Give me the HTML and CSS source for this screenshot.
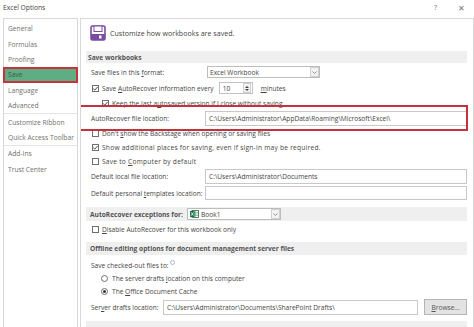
FILE: index.html
```html
<!DOCTYPE html>
<html lang="en">
  <head>
    <meta charset="UTF-8">
    <title>Excel Options</title>
    <link rel="stylesheet" href="styles.css">
  </head>
  <body>
    <div class="dialog">
      <div class="titlebar">
        <span class="title">Excel Options</span>
        <span class="help">?</span>
        <span class="close">&#x2715;</span>
      </div>

      <div class="body">
        <div class="nav">
          <div class="nav-item">General</div>
          <div class="nav-item">Formulas</div>
          <div class="nav-item">Proofing</div>
          <div class="nav-item selected">Save</div>
          <div class="nav-item">Language</div>
          <div class="nav-item">Advanced</div>
          <div class="nav-sep"></div>
          <div class="nav-item">Customize Ribbon</div>
          <div class="nav-item">Quick Access Toolbar</div>
          <div class="nav-sep"></div>
          <div class="nav-item">Add-Ins</div>
          <div class="nav-item">Trust Center</div>
        </div>

        <div class="panel">
          <div class="intro">
            <svg class="save-icon" width="16" height="16" viewBox="0 0 16 16">
              <rect x="1" y="1" width="14" height="14" rx="1.5" fill="#fff" stroke="#7a4ca2" stroke-width="1.6"/>
              <rect x="1" y="9" width="14" height="6" fill="#7a4ca2"/>
              <rect x="9" y="10.5" width="2.5" height="3" fill="#fff"/>
              <rect x="4" y="1" width="8" height="5.5" fill="#fff" stroke="#7a4ca2" stroke-width="1"/>
            </svg>
            <span>Customize how workbooks are saved.</span>
          </div>

          <div class="section">Save workbooks</div>

          <div class="row tall">
            <span class="label short">Save files in this <u>f</u>ormat:</span>
            <div class="select format">
              <span class="select-text">Excel Workbook</span>
              <span class="arrow"><svg width="5" height="3" viewBox="0 0 5 3"><path d="M0.5 0.5 L2.5 2.5 L4.5 0.5" fill="none" stroke="#777" stroke-width="0.8"/></svg></span>
            </div>
          </div>

          <div class="row tall">
            <span class="check on"><svg width="7" height="7" viewBox="0 0 7 7"><path d="M1.2 3.6 L2.8 5.1 L5.8 1.8" fill="none" stroke="#333" stroke-width="0.9"/></svg></span>
            <span>Save <u>A</u>utoRecover information every</span>
            <div class="spin">
              <span>10</span>
              <span class="spin-btns"><i class="up"></i><i class="down"></i></span>
            </div>
            <span class="minutes"><u>m</u>inutes</span>
          </div>

          <div class="row indent">
            <span class="check on"><svg width="7" height="7" viewBox="0 0 7 7"><path d="M1.2 3.6 L2.8 5.1 L5.8 1.8" fill="none" stroke="#333" stroke-width="0.9"/></svg></span>
            <span>Keep the last a<u>u</u>tosaved version if I close without saving</span>
          </div>

          <div class="row tall marked">
            <span class="label">AutoRecover file location:</span>
            <div class="input">C:\Users\Administrator\AppData\Roaming\Microsoft\Excel\</div>
          </div>

          <div class="row">
            <span class="check"></span>
            <span>Don't <u>s</u>how the Backstage when opening or saving files</span>
          </div>

          <div class="row">
            <span class="check on"><svg width="7" height="7" viewBox="0 0 7 7"><path d="M1.2 3.6 L2.8 5.1 L5.8 1.8" fill="none" stroke="#333" stroke-width="0.9"/></svg></span>
            <span class="wide">Show additional places for saving, even if sign-in may be required.</span>
          </div>

          <div class="row">
            <span class="check"></span>
            <span class="wide">Save to <u>C</u>omputer by default</span>
          </div>

          <div class="row tall">
            <span class="label">Default local f<u>i</u>le location:</span>
            <div class="input">C:\Users\Administrator\Documents</div>
          </div>

          <div class="row tall templates">
            <span class="label">Default personal <u>t</u>emplates location:</span>
            <div class="input"></div>
          </div>

          <div class="section with-select">
            <span class="section-label">AutoRecover exceptions for:</span>
            <div class="select book">
              <svg class="xl-icon" width="9" height="8" viewBox="0 0 9 8">
                <rect x="2" y="0.5" width="6.5" height="7" fill="#fff" stroke="#1e7145" stroke-width="0.8"/>
                <path d="M5 0.5 V7.5 M2 2.8 H8.5 M2 5.2 H8.5" stroke="#1e7145" stroke-width="0.6"/>
                <rect x="0" y="1" width="4.5" height="6" fill="#1e7145"/>
                <path d="M1 2.3 L3.5 5.7 M3.5 2.3 L1 5.7" stroke="#fff" stroke-width="0.8"/>
              </svg>
              <span class="select-text">Book1</span>
              <span class="arrow"><svg width="5" height="3" viewBox="0 0 5 3"><path d="M0.5 0.5 L2.5 2.5 L4.5 0.5" fill="none" stroke="#777" stroke-width="0.8"/></svg></span>
            </div>
          </div>

          <div class="row tall">
            <span class="check"></span>
            <span><u>D</u>isable AutoRecover for this workbook only</span>
          </div>

          <div class="section second">Offline editing options for document management server files</div>

          <div class="row checked-out">
            <span>Save checked-out files to:</span>
            <span class="info"></span>
          </div>

          <div class="row radio-row indent">
            <span class="radio"></span>
            <span>The server drafts <u>l</u>ocation on this computer</span>
          </div>

          <div class="row radio-row indent">
            <span class="radio on"></span>
            <span>The <u>O</u>ffice Document Cache</span>
          </div>

          <div class="row tall drafts">
            <span class="label drafts-label">Ser<u>v</u>er drafts location:</span>
            <div class="input">C:\Users\Administrator\Documents\SharePoint Drafts\</div>
            <div class="button"><u>B</u>rowse...</div>
          </div>

          <div class="section last">Preserve visual appearance of the workbook</div>
        </div>
      </div>
    </div>
  </body>
</html>
```

FILE: styles.css
```css
/* Base */
* {
  box-sizing: border-box;
}

body {
  margin: 0;
  width: 474px;
  height: 327px;
  overflow: hidden;
  background-color: #fff;
  font-family: "Open Sans", "Noto Sans", sans-serif;
  font-size: 6.6px;
  color: #454545;
}

u {
  text-decoration-thickness: 0.6px;
  text-underline-offset: 1px;
}

.dialog {
  display: flex;
  flex-direction: column;
  height: 327px;
}

/* Title bar */
.titlebar {
  display: flex;
  align-items: center;
  height: 18px;
  padding: 0 9px 3px 3px;
}

.title {
  flex: 1;
  font-size: 6.7px;
  color: #444;
}

.help {
  font-size: 7px;
  color: #777;
  margin-right: 21px;
}

.close {
  font-size: 8px;
  color: #777;
}

/* Two columns */
.body {
  display: flex;
  flex: 1;
  gap: 2px;
  padding-left: 3px;
  min-height: 0;
}

/* Left navigation */
.nav {
  width: 75px;
  border: 1px solid #d8d8d8;
  border-bottom: none;
  padding-top: 2px;
}

.nav-item {
  display: flex;
  align-items: center;
  height: 15.4px;
  padding-left: 4px;
  color: #707070;
  font-size: 6.7px;
  white-space: nowrap;
}

.nav-item.selected {
  margin: 0 -1px;
  padding-left: 3px;
  background-color: #5fad82;
  border: 2px solid #c8323e;
  color: #3c5a46;
}

.nav-sep {
  height: 1px;
  background-color: #e4e4e4;
}

/* Right panel */
.panel {
  width: 394px;
  border: 1px solid #d8d8d8;
  border-bottom: none;
  padding: 6px 6px 0 5px;
  overflow: hidden;
}

.intro {
  display: flex;
  align-items: center;
  height: 16px;
  padding-left: 4px;
  gap: 4px;
  font-size: 7.1px;
  color: #444;
}

.section {
  display: flex;
  align-items: center;
  height: 12px;
  margin-top: 10px;
  margin-bottom: 1px;
  padding-left: 2px;
  background-color: #efefef;
  font-weight: 700;
  color: #555;
  white-space: nowrap;
}

.section.with-select {
  height: 14px;
  margin-top: 6px;
  margin-bottom: 0;
  padding-left: 4px;
}

.section.second {
  height: 13px;
  margin-top: 5px;
  margin-bottom: 0;
  padding-left: 4px;
}

.section.last {
  height: 13px;
  margin-top: 6px;
  padding-left: 4px;
  align-items: flex-end;
}

.section-label {
  width: 97px;
}

/* Option rows */
.row {
  display: flex;
  align-items: center;
  height: 14px;
  padding-left: 5px;
  white-space: nowrap;
}

.row.tall {
  height: 16px;
}

.row.indent {
  padding-left: 15px;
}

.row.templates {
  margin-top: 1px;
}

.row.checked-out {
  margin-top: 3px;
}

.row.radio-row {
  height: 13px;
}

.row.drafts {
  margin-top: 1px;
}

.wide {
  letter-spacing: 0.25px;
}

.label {
  flex: none;
  width: 114px;
}

.label.short {
  width: 116px;
}

.label.drafts-label {
  width: 72px;
}

/* Red annotation around the AutoRecover location */
.marked {
  position: relative;
}

.marked::after {
  content: "";
  position: absolute;
  top: -5px;
  bottom: -5px;
  left: -9px;
  right: -1px;
  border: 2px solid #c4323e;
}

/* Controls */
.check {
  flex: none;
  display: flex;
  width: 7px;
  height: 7px;
  margin-left: 1px;
  margin-right: 3px;
  border: 1px solid #6f6f6f;
  background-color: #fff;
}

.check svg {
  margin: -1px;
}

.radio {
  flex: none;
  display: flex;
  align-items: center;
  justify-content: center;
  width: 7px;
  height: 7px;
  margin-right: 4px;
  border: 1px solid #6f6f6f;
  border-radius: 50%;
}

.radio.on::before {
  content: "";
  width: 3px;
  height: 3px;
  border-radius: 50%;
  background-color: #333;
}

.select {
  display: flex;
  align-items: center;
  height: 12px;
  border: 1px solid #bdbdbd;
  background-color: #fff;
}

.select.format {
  width: 113px;
}

.select.book {
  width: 94px;
  font-weight: normal;
  color: #454545;
}

.select-text {
  flex: 1;
  padding-left: 2px;
}

.xl-icon {
  margin-left: 2px;
}

.arrow {
  display: flex;
  align-items: center;
  justify-content: center;
  width: 9px;
  height: 10px;
  border: 1px solid #cfcfcf;
  background-color: #f3f3f3;
}

.spin {
  display: flex;
  align-items: center;
  width: 34px;
  height: 12px;
  margin-left: 5px;
  padding-left: 3px;
  border: 1px solid #c2c2c2;
}

.spin span:first-child {
  flex: 1;
}

.spin-btns {
  display: flex;
  flex-direction: column;
  align-items: center;
  justify-content: center;
  gap: 1px;
  width: 8px;
  height: 10px;
  margin-right: 1px;
  border: 1px solid #cfcfcf;
  background-color: #f3f3f3;
}

.spin-btns i {
  width: 0;
  height: 0;
  border-left: 2px solid transparent;
  border-right: 2px solid transparent;
}

.spin-btns .up {
  border-bottom: 2px solid #444;
}

.spin-btns .down {
  border-top: 2px solid #444;
}

.minutes {
  margin-left: 8px;
}

.input {
  flex: 1;
  display: flex;
  align-items: center;
  height: 15px;
  padding-left: 3px;
  border: 1px solid #c8c8c8;
  background-color: #fff;
  overflow: hidden;
}

.templates .input {
  height: 14px;
}

.info {
  width: 5px;
  height: 5px;
  margin-left: 1px;
  margin-bottom: 6px;
  border: 1px solid #a8b8c8;
  border-radius: 50%;
}

.button {
  display: flex;
  align-items: center;
  justify-content: center;
  width: 43px;
  height: 16px;
  margin-left: 6px;
  border: 1px solid #b4b4b4;
  background-color: #e3e3e3;
  color: #555;
}
```
